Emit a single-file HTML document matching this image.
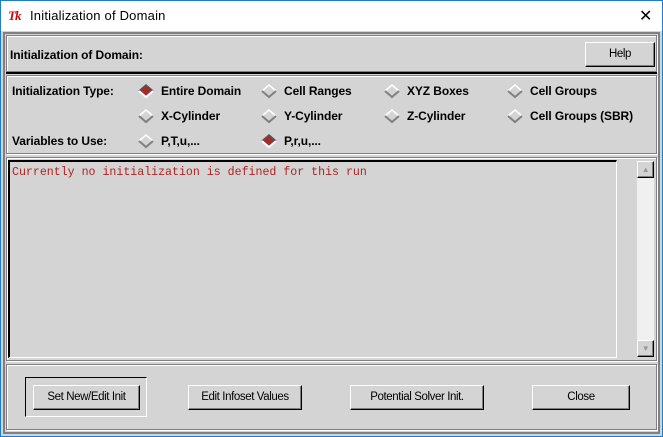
<!DOCTYPE html>
<html><head><style>
*{margin:0;padding:0;box-sizing:border-box}
body{width:663px;height:437px;background:#fff;font-family:"Liberation Sans",Arial,sans-serif;position:relative;overflow:hidden}
.a{position:absolute}
.win{left:0;top:0;width:663px;height:437px;border:1px solid #1a7fd4}
.title{left:1px;top:1px;width:661px;height:30px;background:#fff}
.body{left:1px;top:31px;width:661px;height:405px;background:#d4d4d4}
.groove{border:1px solid #808080;box-shadow:inset 1px 1px 0 #fff,1px 1px 0 #fff}
.b{font-weight:bold;font-size:12px;color:#000;letter-spacing:-0.1px}
.btn{background:#d4d4d4;border:1px solid;border-color:#fff #000 #000 #fff;box-shadow:inset -1px -1px 0 #808080;font-size:11.5px;text-align:center;line-height:23px;letter-spacing:-0.4px}
.d{width:16px;height:12px}
</style></head><body>
<div class="a win"></div>
<div class="a title"></div>
<div class="a" style="left:8px;top:8px;font:italic bold 13px 'Liberation Serif',serif;color:#d00;letter-spacing:-1px">Tk</div>
<div class="a" style="left:30px;top:8px;font-size:13px;color:#000;letter-spacing:0.2px">Initialization of Domain</div>
<div class="a" style="left:639px;top:6px;font-size:16px;color:#000">✕</div>
<div class="a body"></div>
<div class="a" style="left:3px;top:32px;width:657px;height:402px;border:2px solid #808080"></div>
<div class="a groove" style="left:6px;top:35px;width:651px;height:37px"></div>
<div class="a b" style="left:10px;top:48px">Initialization of Domain:</div>
<div class="a btn" style="left:585px;top:42px;width:70px;height:25px">Help</div>
<div class="a" style="left:6px;top:72px;width:651px;height:2px;background:#000"></div>
<div class="a groove" style="left:6px;top:75px;width:651px;height:79px"></div>
<div class="a b" style="left:12px;top:84px">Initialization Type:</div>
<div class="a b" style="left:12px;top:134px">Variables to Use:</div>
<svg class="a" style="left:0;top:0" width="663" height="437">
<defs>
<g id="off"><polygon points="0,6 7,0 14,6 7,12" fill="#d4d4d4"/><polyline points="0,6 7,0 14,6" fill="none" stroke="#fff" stroke-width="1.5"/><polyline points="0,6 7,12 14,6" fill="none" stroke="#808080" stroke-width="2"/></g>
<g id="on"><polygon points="0,6 7,0 14,6 7,12" fill="#a52a2a"/><polyline points="0,6 7,0 14,6" fill="none" stroke="#555" stroke-width="1.5"/><polyline points="0,6 7,12 14,6" fill="none" stroke="#fff" stroke-width="2"/></g>
</defs>
<use href="#on" x="139" y="85"/><use href="#off" x="262" y="85"/><use href="#off" x="385" y="85"/><use href="#off" x="508" y="85"/>
<use href="#off" x="139" y="110"/><use href="#off" x="262" y="110"/><use href="#off" x="385" y="110"/><use href="#off" x="508" y="110"/>
<use href="#off" x="139" y="135"/><use href="#on" x="262" y="135"/>
</svg>
<div class="a b" style="left:161px;top:84px">Entire Domain</div>
<div class="a b" style="left:284px;top:84px">Cell Ranges</div>
<div class="a b" style="left:407px;top:84px">XYZ Boxes</div>
<div class="a b" style="left:530px;top:84px">Cell Groups</div>
<div class="a b" style="left:161px;top:109px">X-Cylinder</div>
<div class="a b" style="left:284px;top:109px">Y-Cylinder</div>
<div class="a b" style="left:407px;top:109px">Z-Cylinder</div>
<div class="a b" style="left:530px;top:109px">Cell Groups (SBR)</div>
<div class="a b" style="left:161px;top:134px">P,T,u,...</div>
<div class="a b" style="left:284px;top:134px">P,r,u,...</div>
<div class="a groove" style="left:6px;top:157px;width:651px;height:204px"></div>
<div class="a" style="left:8px;top:160px;width:609px;height:198px;border-top:2px solid #000;border-left:2px solid #000;border-right:1px solid #fff;border-bottom:1px solid #fff"></div>
<div class="a" style="left:12px;top:166px;font:11.6px 'Liberation Mono',monospace;color:#b22222">Currently no initialization is defined for this run</div>
<div class="a" style="left:637px;top:161px;width:17px;height:196px;background:#f0f0f0"></div>
<div class="a btn" style="left:637px;top:161px;width:17px;height:17px;font-size:8px;line-height:15px;color:#999">▲</div>
<div class="a btn" style="left:637px;top:340px;width:17px;height:17px;font-size:8px;line-height:15px;color:#999">▼</div>
<div class="a groove" style="left:6px;top:364px;width:651px;height:66px"></div>
<div class="a" style="left:25px;top:377px;width:122px;height:40px;border:1px solid;border-color:#000 #fff #fff #000"></div>
<div class="a btn" style="left:33px;top:385px;width:107px;height:25px">Set New/Edit Init</div>
<div class="a btn" style="left:188px;top:385px;width:114px;height:25px">Edit Infoset Values</div>
<div class="a btn" style="left:350px;top:385px;width:134px;height:25px">Potential Solver Init.</div>
<div class="a btn" style="left:532px;top:385px;width:98px;height:25px">Close</div>
</body></html>
